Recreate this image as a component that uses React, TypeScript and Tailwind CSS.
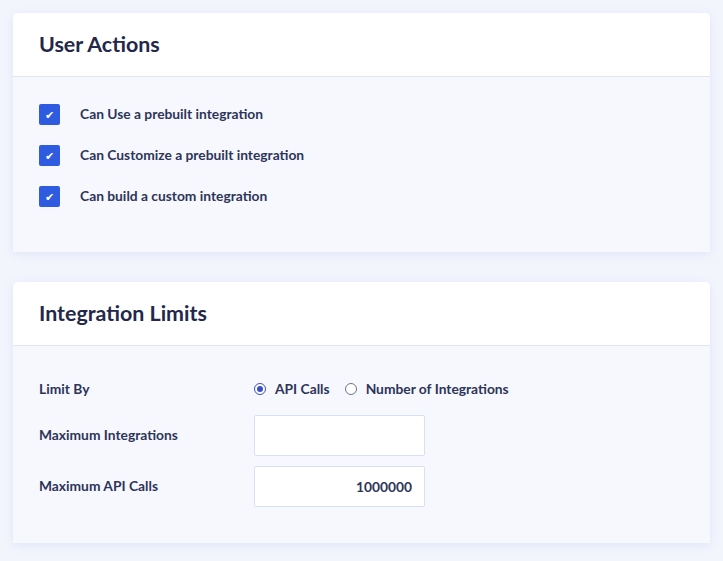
import { useState } from 'react'

const actions = [
    'Can Use a prebuilt integration',
    'Can Customize a prebuilt integration',
    'Can build a custom integration',
]

function Card({ title, children }: { title: string; children: React.ReactNode }) {
    return (
        <div className="rounded-t-[5px] bg-[#f7f8fe] shadow-[0_2px_10px_rgba(200,210,240,0.45)]">
            <div className="h-[64px] flex items-center px-[26px] bg-white rounded-t-[5px] border-b border-[#e1e4f2]">
                <h2 className="text-[21.4px] font-bold text-[#23284a]">{title}</h2>
            </div>
            {children}
        </div>
    )
}

function Radio({ checked, label, onClick }: { checked: boolean; label: string; onClick: () => void }) {
    return (
        <button onClick={onClick} className="flex items-center gap-[9px]">
            <span
                className={
                    checked
                        ? 'w-[12px] h-[12px] rounded-full border-[1.5px] border-[#3a4fc4] flex items-center justify-center bg-white'
                        : 'w-[12px] h-[12px] rounded-full border-[1.5px] border-[#707480] bg-white'
                }
            >
                {checked && <span className="w-[6px] h-[6px] rounded-full bg-[#3a4fc4]"></span>}
            </span>
            <span className="text-[13.8px] font-bold text-[#2c3559]">{label}</span>
        </button>
    )
}

export default function App() {
    const [checked, setChecked] = useState([true, true, true])
    const [limitBy, setLimitBy] = useState('api')
    const [maxIntegrations, setMaxIntegrations] = useState('')
    const [maxCalls, setMaxCalls] = useState('1000000')

    return (
        <div className="min-h-screen bg-[#f3f5fd] px-[13px] pt-[13px] font-['Lato','Noto_Sans',sans-serif]">
            <Card title="User Actions">
                <div className="flex flex-col gap-[20px] px-[26px] pt-[27px] pb-[45px]">
                    {actions.map((a, i) => (
                        <label key={a} className="flex items-center gap-[20px] cursor-pointer">
                            <span
                                onClick={() => setChecked(checked.map((c, j) => (j === i ? !c : c)))}
                                className={
                                    checked[i]
                                        ? 'w-[21px] h-[21px] rounded-[2px] bg-[#2f5be0] flex items-center justify-center text-white text-[11px] leading-none'
                                        : 'w-[21px] h-[21px] rounded-[2px] bg-white border border-[#c9d0e6]'
                                }
                            >
                                {checked[i] && '✔'}
                            </span>
                            <span className="text-[13.8px] font-bold text-[#2c3559]">{a}</span>
                        </label>
                    ))}
                </div>
            </Card>

            <div className="h-[30px]"></div>

            <Card title="Integration Limits">
                <div className="px-[26px] pt-[27px] pb-[36px]">
                    <div className="grid grid-cols-[215px_1fr] grid-rows-[32px_41px_41px] items-center gap-y-[10px]">
                        <span className="text-[13.8px] font-bold text-[#2c3559]">Limit By</span>
                        <div className="flex items-center gap-[15px]">
                            <Radio checked={limitBy === 'api'} label="API Calls" onClick={() => setLimitBy('api')} />
                            <Radio checked={limitBy === 'num'} label="Number of Integrations" onClick={() => setLimitBy('num')} />
                        </div>

                        <span className="text-[13.8px] font-bold text-[#2c3559]">Maximum Integrations</span>
                        <input
                            value={maxIntegrations}
                            onChange={(e) => setMaxIntegrations(e.target.value)}
                            className="w-[171px] h-[41px] bg-white border border-[#d6e0f8] rounded-[2px] px-[12px] text-right text-[13.8px] font-bold text-[#2c3559] outline-none"
                        />

                        <span className="text-[13.8px] font-bold text-[#2c3559]">Maximum API Calls</span>
                        <input
                            value={maxCalls}
                            onChange={(e) => setMaxCalls(e.target.value)}
                            className="w-[171px] h-[41px] bg-white border border-[#d6e0f8] rounded-[2px] px-[12px] text-right text-[13.8px] font-bold text-[#2c3559] outline-none"
                        />
                    </div>
                </div>
            </Card>
        </div>
    )
}
